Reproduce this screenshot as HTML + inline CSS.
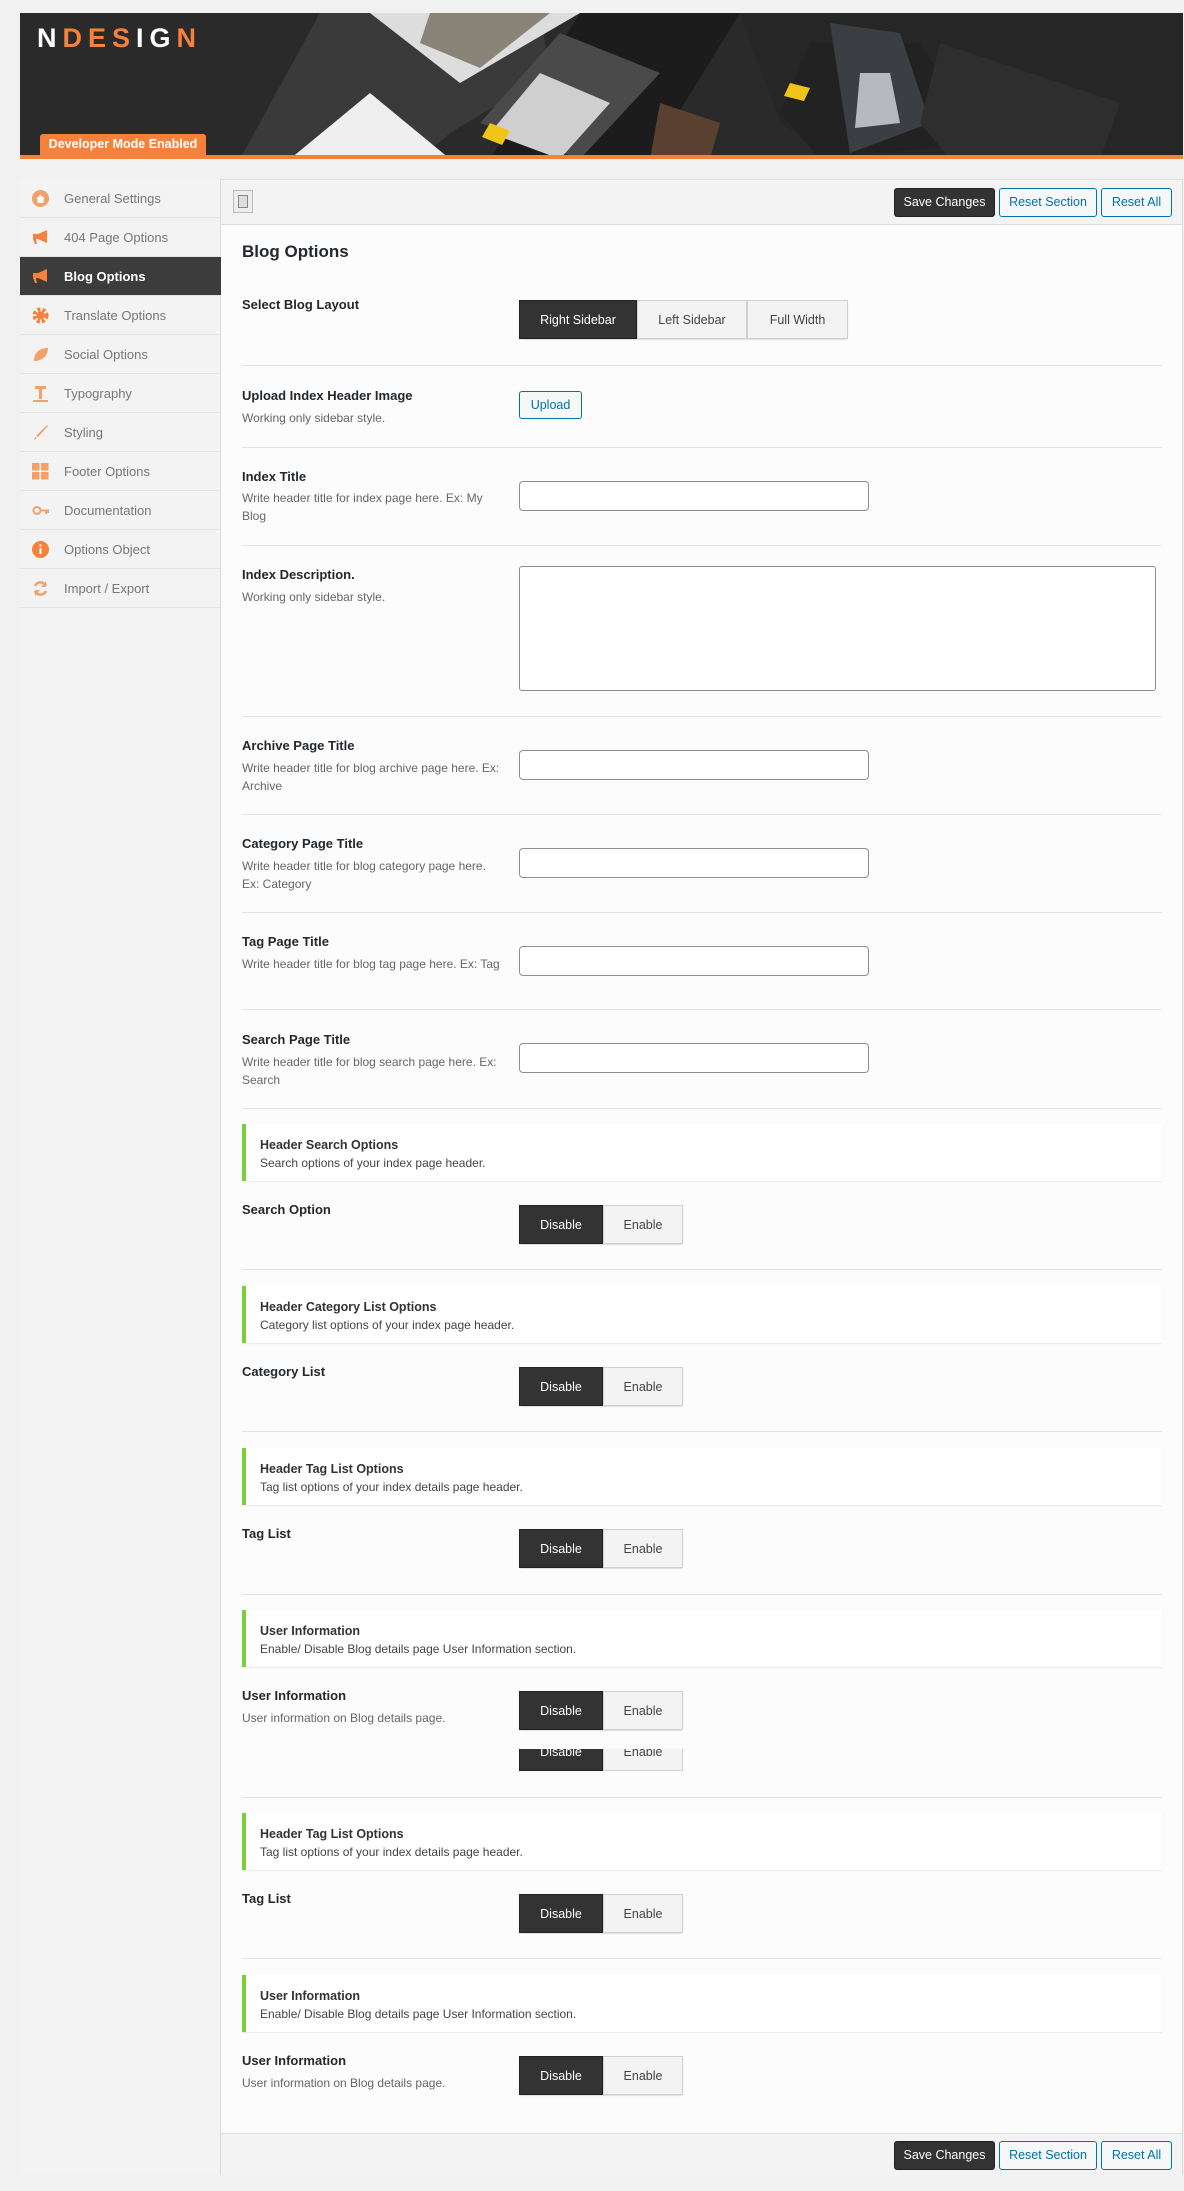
<!DOCTYPE html>
<html><head><meta charset="utf-8"><style>
*{box-sizing:border-box;margin:0;padding:0}
body{width:1184px;height:2191px;background:#f1f1f1;font-family:"Liberation Sans",sans-serif;position:relative;overflow:hidden;color:#23282d}
.a{position:absolute}
#banner{left:20px;top:13px;width:1163px;height:146px;background:#2a2a2a;overflow:hidden;border-bottom:4px solid #f5813a}
#side{left:20px;top:179px;width:201px;height:1996px;background:#f3f3f3;border-right:1px solid #dcdcdc}
.nav{position:absolute;left:0;width:201px;height:39px;border-bottom:1px solid #e3e3e3;font-size:13px;color:#777;line-height:39px;padding-left:44px}
.nav svg{position:absolute;left:12px;top:11px}
.nav.on{background:#3c3c3c;color:#fff;font-weight:bold}
#main{left:221px;top:179px;width:962px;height:1996px;background:#fcfcfc;border:1px solid #dedede;border-left:none}
.bar{position:absolute;left:0;width:961px;height:45px;background:#f3f3f3;border-bottom:1px solid #ddd}
.btn{position:absolute;height:29px;font-size:12.5px;line-height:27px;text-align:center;border-radius:3px}
.save{background:#333;color:#fff;border:1px solid #222}
.reset{background:#f6f7f7;color:#0073aa;border:1px solid #0073aa}
.lbl{position:absolute;left:242px;font-size:13px;font-weight:bold;color:#23282d}
.desc{position:absolute;left:242px;font-size:12px;color:#666;width:260px;line-height:18px}
.hr{position:absolute;left:242px;width:920px;height:1px;background:#e4e4e4}
.inp{position:absolute;left:519px;width:350px;height:30px;background:#fff;border:1px solid #8c8f94;border-radius:4px}
.seg{position:absolute;left:519px;height:39px;display:flex;border-radius:3px;box-shadow:0 1px 1px rgba(0,0,0,.12)}
.seg div{height:39px;line-height:39px;text-align:center;font-size:12.5px;border:1px solid #d0d0d0;background:#f3f3f3;color:#444}
.seg div.on{background:#333;color:#fff;border-color:#222}
.info{position:absolute;left:242px;width:920px;height:57px;background:#fff;border-left:4px solid #7ad03a;box-shadow:0 1px 1px rgba(0,0,0,.08);padding:10px 14px}
.info b{display:block;font-size:12.5px;color:#333;font-weight:bold;margin-top:4px}
.info span{display:block;font-size:12px;color:#444;margin-top:4px}
</style></head><body>

<div id="banner" class="a">
<svg width="1163" height="146" style="position:absolute;left:0;top:0">
<polygon points="560,0 720,0 630,146 470,146" fill="#1c1c1c"/>
<polygon points="300,0 520,0 530,60 430,120 400,146 220,146" fill="#3a3a3a"/>
<polygon points="350,0 560,0 440,70" fill="#ddd"/>
<polygon points="410,0 530,0 460,55 400,30" fill="#8a8378"/>
<polygon points="270,146 350,80 430,146" fill="#eee"/>
<polygon points="540,20 640,60 560,146 460,110" fill="#4a4a4a"/>
<polygon points="520,60 590,90 540,146 470,120" fill="#cfcfcf"/>
<polygon points="470,110 490,118 482,132 462,124" fill="#f0c419"/>
<polygon points="720,0 1163,0 1163,146 820,146 760,110" fill="#262626"/>
<polygon points="790,30 900,30 960,130 800,146 760,100" fill="#222"/>
<polygon points="810,10 880,20 910,110 830,140" fill="#3b3f44"/>
<polygon points="840,60 870,60 880,110 835,115" fill="#b6b9bd"/>
<polygon points="770,70 790,75 784,88 764,83" fill="#f0c419"/>
<polygon points="920,30 1100,90 1080,146 930,146 900,110" fill="#2e2e2e"/>
<polygon points="640,90 700,110 690,146 630,146" fill="#5a4030"/>
</svg>
<div class="a" style="left:17px;top:10px;font-size:27px;letter-spacing:6px;font-weight:bold;color:#fff">N<span style="color:#f5813a">DES</span>IG<span style="color:#f5813a">N</span></div>
<div class="a" style="left:20px;top:121px;width:166px;height:21px;background:#f5813a;border-radius:3px 3px 0 0;color:#fff;font-size:12.5px;font-weight:bold;line-height:21px;text-align:center">Developer Mode Enabled</div>
</div>

<div id="side" class="a">
<div class="nav" style="top:0"><svg width="17" height="17"><circle cx="8.5" cy="8.5" r="8.5" fill="#f4a06a"/><path d="M4 9 L8.5 4.5 L13 9 L11.5 9 L11.5 13 L5.5 13 L5.5 9Z" fill="#fff"/></svg>General Settings</div>
<div class="nav" style="top:39px"><svg width="18" height="16"><path d="M1 5 L6 5 L15 1 L15 14 L6 10 L4 10 L5 15 L3 15 L1 10Z" fill="#f5813a"/></svg>404 Page Options</div>
<div class="nav on" style="top:78px"><svg width="18" height="16"><path d="M1 5 L6 5 L15 1 L15 14 L6 10 L4 10 L5 15 L3 15 L1 10Z" fill="#f5813a"/></svg>Blog Options</div>
<div class="nav" style="top:117px"><svg width="17" height="17"><circle cx="8.5" cy="8.5" r="6" fill="none" stroke="#f5813a" stroke-width="4" stroke-dasharray="3 2"/><circle cx="8.5" cy="8.5" r="4" fill="#f5813a"/></svg>Translate Options</div>
<div class="nav" style="top:156px"><svg width="17" height="17"><path d="M2 15 C2 6 8 2 16 2 C16 10 10 15 2 15Z" fill="#f4a06a"/></svg>Social Options</div>
<div class="nav" style="top:195px"><svg width="17" height="17"><path d="M3 1 H14 V4 H10 V14 H7 V4 H3Z M1 15 H16 V17 H1Z" fill="#f4a06a"/></svg>Typography</div>
<div class="nav" style="top:234px"><svg width="17" height="17"><path d="M15 1 L16 2 L6 13 L4 12Z M3 13 L5 14 L2 16Z" fill="#f4a06a"/></svg>Styling</div>
<div class="nav" style="top:273px"><svg width="17" height="17"><rect x="0" y="0" width="7.5" height="7.5" fill="#f4a06a"/><rect x="9" y="0" width="7.5" height="7.5" fill="#f4a06a"/><rect x="0" y="9" width="7.5" height="7.5" fill="#f4a06a"/><rect x="9" y="9" width="7.5" height="7.5" fill="#f4a06a"/></svg>Footer Options</div>
<div class="nav" style="top:312px"><svg width="18" height="17"><circle cx="5" cy="8.5" r="3.5" fill="none" stroke="#f4a06a" stroke-width="2"/><path d="M8 8.5 H17 M14 8.5 V12 M16 8.5 V11" stroke="#f4a06a" stroke-width="2"/></svg>Documentation</div>
<div class="nav" style="top:351px"><svg width="17" height="17"><circle cx="8.5" cy="8.5" r="8.5" fill="#f5813a"/><rect x="7.5" y="7" width="2" height="6" fill="#fff"/><rect x="7.5" y="3.5" width="2" height="2" fill="#fff"/></svg>Options Object</div>
<div class="nav" style="top:390px"><svg width="17" height="17"><path d="M14 6 A6 6 0 0 0 3 6 M3 11 A6 6 0 0 0 14 11" fill="none" stroke="#f4a06a" stroke-width="2.5"/><path d="M14 1 V7 H9Z M3 16 V10 H8Z" fill="#f4a06a"/></svg>Import / Export</div>
</div>

<div id="main" class="a">
<div class="bar" style="top:0"></div>
<div class="bar" style="top:1953px;height:43px;border-top:1px solid #ddd;border-bottom:none"></div>
</div>
<div class="a" style="left:233px;top:190px;width:20px;height:23px;border:1px solid #bbb;background:#eee"><div style="margin:4px 4px;width:10px;height:13px;border:1px solid #888;background:#ddd"></div></div>
<div class="btn save" style="left:894px;top:188px;width:101px">Save Changes</div>
<div class="btn reset" style="left:999px;top:188px;width:98px">Reset Section</div>
<div class="btn reset" style="left:1101px;top:188px;width:71px">Reset All</div>
<div class="btn save" style="left:894px;top:2141px;width:101px">Save Changes</div>
<div class="btn reset" style="left:999px;top:2141px;width:98px">Reset Section</div>
<div class="btn reset" style="left:1101px;top:2141px;width:71px">Reset All</div>

<div class="a" style="left:242px;top:242px;font-size:17px;font-weight:bold;color:#23282d">Blog Options</div>

<div class="lbl" style="top:297px">Select Blog Layout</div>
<div class="seg" style="top:300px"><div class="on" style="width:118px">Right Sidebar</div><div style="width:110px">Left Sidebar</div><div style="width:101px">Full Width</div></div>
<div class="hr" style="top:365px"></div>

<div class="lbl" style="top:388px">Upload Index Header Image</div>
<div class="desc" style="top:409px">Working only sidebar style.</div>
<div class="btn reset" style="left:519px;top:391px;width:63px;height:28px;line-height:26px">Upload</div>
<div class="hr" style="top:447px"></div>

<div class="lbl" style="top:469px">Index Title</div>
<div class="desc" style="top:489px">Write header title for index page here. Ex: My Blog</div>
<div class="inp" style="top:481px"></div>
<div class="hr" style="top:545px"></div>

<div class="lbl" style="top:567px">Index Description.</div>
<div class="desc" style="top:588px">Working only sidebar style.</div>
<div class="inp" style="top:566px;width:637px;height:125px;border-radius:3px"></div>
<div class="hr" style="top:716px"></div>

<div class="lbl" style="top:738px">Archive Page Title</div>
<div class="desc" style="top:759px">Write header title for blog archive page here. Ex: Archive</div>
<div class="inp" style="top:750px"></div>
<div class="hr" style="top:814px"></div>

<div class="lbl" style="top:836px">Category Page Title</div>
<div class="desc" style="top:857px">Write header title for blog category page here. Ex: Category</div>
<div class="inp" style="top:848px"></div>
<div class="hr" style="top:912px"></div>

<div class="lbl" style="top:934px">Tag Page Title</div>
<div class="desc" style="top:955px">Write header title for blog tag page here. Ex: Tag</div>
<div class="inp" style="top:946px"></div>
<div class="hr" style="top:1009px"></div>

<div class="lbl" style="top:1032px">Search Page Title</div>
<div class="desc" style="top:1053px">Write header title for blog search page here. Ex: Search</div>
<div class="inp" style="top:1043px"></div>
<div class="hr" style="top:1108px"></div>

<div class="info" style="top:1124px"><b>Header Search Options</b><span>Search options of your index page header.</span></div>
<div class="lbl" style="top:1202px">Search Option</div>
<div class="seg" style="top:1205px"><div class="on" style="width:84px">Disable</div><div style="width:80px">Enable</div></div>
<div class="hr" style="top:1269px"></div>

<div class="info" style="top:1286px"><b>Header Category List Options</b><span>Category list options of your index page header.</span></div>
<div class="lbl" style="top:1364px">Category List</div>
<div class="seg" style="top:1367px"><div class="on" style="width:84px">Disable</div><div style="width:80px">Enable</div></div>
<div class="hr" style="top:1431px"></div>

<div class="info" style="top:1448px"><b>Header Tag List Options</b><span>Tag list options of your index details page header.</span></div>
<div class="lbl" style="top:1526px">Tag List</div>
<div class="seg" style="top:1529px"><div class="on" style="width:84px">Disable</div><div style="width:80px">Enable</div></div>
<div class="hr" style="top:1594px"></div>

<div class="info" style="top:1610px"><b>User Information</b><span>Enable/ Disable Blog details page User Information section.</span></div>
<div class="lbl" style="top:1688px">User Information</div>
<div class="desc" style="top:1709px">User information on Blog details page.</div>
<div class="seg" style="top:1691px"><div class="on" style="width:84px">Disable</div><div style="width:80px">Enable</div></div>
<div class="a" style="left:519px;top:1749px;width:164px;height:22px;overflow:hidden"><div class="seg" style="left:0;top:-17px"><div class="on" style="width:84px">Disable</div><div style="width:80px">Enable</div></div></div>
<div class="hr" style="top:1797px"></div>

<div class="info" style="top:1813px"><b>Header Tag List Options</b><span>Tag list options of your index details page header.</span></div>
<div class="lbl" style="top:1891px">Tag List</div>
<div class="seg" style="top:1894px"><div class="on" style="width:84px">Disable</div><div style="width:80px">Enable</div></div>
<div class="hr" style="top:1958px"></div>

<div class="info" style="top:1975px"><b>User Information</b><span>Enable/ Disable Blog details page User Information section.</span></div>
<div class="lbl" style="top:2053px">User Information</div>
<div class="desc" style="top:2074px">User information on Blog details page.</div>
<div class="seg" style="top:2056px"><div class="on" style="width:84px">Disable</div><div style="width:80px">Enable</div></div>
</body></html>
